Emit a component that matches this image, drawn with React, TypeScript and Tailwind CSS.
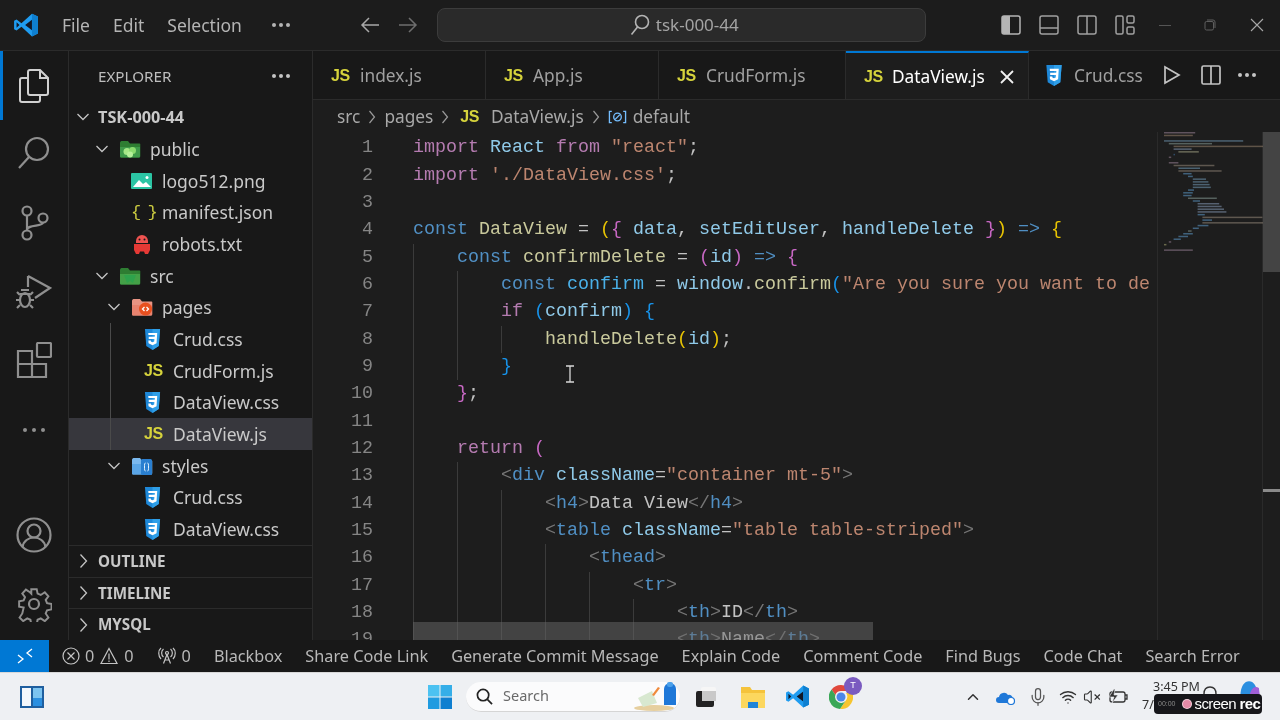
import React from 'react';
import { Mic, Wifi, VolumeX, ChevronUp } from 'lucide-react';

type Token = [string, string];

const KW = 'text-[#c586c0]';
const BL = 'text-[#569cd6]';
const VAR = 'text-[#9cdcfe]';
const CON = 'text-[#4fc1ff]';
const FN = 'text-[#dcdcaa]';
const STR = 'text-[#ce9178]';
const TXT = 'text-[#d4d4d4]';
const YEL = 'text-[#ffd700]';
const PNK = 'text-[#da70d6]';
const BRK = 'text-[#179fff]';
const GR = 'text-[#808080]';

const codeLines: { indent: number; tokens: Token[] }[] = [
  { indent: 0, tokens: [[KW, 'import'], [TXT, ' '], [VAR, 'React'], [TXT, ' '], [KW, 'from'], [TXT, ' '], [STR, '"react"'], [TXT, ';']] },
  { indent: 0, tokens: [[KW, 'import'], [TXT, ' '], [STR, "'./DataView.css'"], [TXT, ';']] },
  { indent: 0, tokens: [] },
  { indent: 0, tokens: [[BL, 'const'], [TXT, ' '], [FN, 'DataView'], [TXT, ' = '], [YEL, '('], [PNK, '{'], [TXT, ' '], [VAR, 'data'], [TXT, ', '], [VAR, 'setEditUser'], [TXT, ', '], [VAR, 'handleDelete'], [TXT, ' '], [PNK, '}'], [YEL, ')'], [TXT, ' '], [BL, '=>'], [TXT, ' '], [YEL, '{']] },
  { indent: 1, tokens: [[BL, 'const'], [TXT, ' '], [FN, 'confirmDelete'], [TXT, ' = '], [PNK, '('], [VAR, 'id'], [PNK, ')'], [TXT, ' '], [BL, '=>'], [TXT, ' '], [PNK, '{']] },
  { indent: 2, tokens: [[BL, 'const'], [TXT, ' '], [CON, 'confirm'], [TXT, ' = '], [VAR, 'window'], [TXT, '.'], [FN, 'confirm'], [BRK, '('], [STR, '"Are you sure you want to de']] },
  { indent: 2, tokens: [[KW, 'if'], [TXT, ' '], [BRK, '('], [VAR, 'confirm'], [BRK, ')'], [TXT, ' '], [BRK, '{']] },
  { indent: 3, tokens: [[FN, 'handleDelete'], [YEL, '('], [VAR, 'id'], [YEL, ')'], [TXT, ';']] },
  { indent: 2, tokens: [[BRK, '}']] },
  { indent: 1, tokens: [[PNK, '}'], [TXT, ';']] },
  { indent: 1, tokens: [] },
  { indent: 1, tokens: [[KW, 'return'], [TXT, ' '], [PNK, '(']] },
  { indent: 2, tokens: [[GR, '<'], [BL, 'div'], [TXT, ' '], [VAR, 'className'], [TXT, '='], [STR, '"container mt-5"'], [GR, '>']] },
  { indent: 3, tokens: [[GR, '<'], [BL, 'h4'], [GR, '>'], [TXT, 'Data View'], [GR, '</'], [BL, 'h4'], [GR, '>']] },
  { indent: 3, tokens: [[GR, '<'], [BL, 'table'], [TXT, ' '], [VAR, 'className'], [TXT, '='], [STR, '"table table-striped"'], [GR, '>']] },
  { indent: 4, tokens: [[GR, '<'], [BL, 'thead'], [GR, '>']] },
  { indent: 5, tokens: [[GR, '<'], [BL, 'tr'], [GR, '>']] },
  { indent: 6, tokens: [[GR, '<'], [BL, 'th'], [GR, '>'], [TXT, 'ID'], [GR, '</'], [BL, 'th'], [GR, '>']] },
  { indent: 6, tokens: [[GR, '<'], [BL, 'th'], [GR, '>'], [TXT, 'Name'], [GR, '</'], [BL, 'th'], [GR, '>']] },
];

// [indent chars, length, colour] for the minimap rows
const minimapRows: [number, number, string][] = [
  [0, 26, '#7d6a7a'], [0, 24, '#7d6a5a'], [0, 0, ''], [0, 66, '#5f7f95'], [4, 36, '#6f7f7a'], [8, 100, '#7a6a5a'],
  [8, 15, '#6f7f95'], [12, 17, '#8a8a70'], [8, 1, '#3f6f9f'], [4, 2, '#7d6a7a'], [0, 0, ''], [4, 8, '#7d6a7a'],
  [8, 34, '#7a7065'], [12, 18, '#5f7f95'], [12, 36, '#7a7065'], [16, 7, '#4f7fa5'], [20, 4, '#4f7fa5'], [24, 11, '#5f7f95'],
  [24, 13, '#5f7f95'], [24, 14, '#5f7f95'], [24, 15, '#5f7f95'], [20, 5, '#4f7fa5'], [16, 8, '#4f7fa5'], [16, 7, '#4f7fa5'],
  [20, 24, '#6f7f7a'], [24, 6, '#4f7fa5'], [28, 18, '#6f7f95'], [28, 20, '#6f7f95'], [28, 22, '#6f7f95'], [28, 24, '#6f7f95'],
  [28, 6, '#4f7fa5'], [32, 50, '#7a7065'], [32, 8, '#4f7fa5'], [32, 68, '#7a7065'], [28, 9, '#4f7fa5'], [24, 5, '#4f7fa5'],
  [20, 3, '#6f7f7a'], [16, 8, '#4f7fa5'], [12, 8, '#4f7fa5'], [8, 6, '#4f7fa5'], [4, 2, '#7d6a7a'], [0, 2, '#8a8a60'],
  [0, 0, ''], [0, 24, '#7d6a7a'],
];

const VSCodeLogo = ({ className }: { className: string }) => (
  <svg viewBox="0 0 24 24" className={className}>
    <path d="M17.5 1.5 23 4.2v15.6l-5.5 2.7L7.8 13.6l-4.5 3.5L1 15.9V8.1l2.3-1.2 4.5 3.5L17.5 1.5Z" fill="#1f9cf0" />
    <path d="M17.5 7.2 11.2 12l6.3 4.8V7.2ZM3.3 9.4v5.2L6 12 3.3 9.4Z" fill="#111827" />
    <path d="M17.5 1.5 23 4.2v15.6l-5.5 2.7V1.5Z" fill="#0e7fd0" />
  </svg>
);

const JsIcon = ({ className = '' }: { className?: string }) => (
  <span className={`font-['Liberation_Sans'] font-bold text-[16px] tracking-[-0.5px] text-[#d6d33c] ${className}`}>JS</span>
);

const CssIcon = ({ className }: { className: string }) => (
  <svg viewBox="0 0 18 22" className={className}>
    <path d="M1 0h16l-1.4 18L9 22l-6.600-4L1 0Z" fill="#1e88d8" />
    <path d="M9 0h8l-1.400 18L9 22V0Z" fill="#2f9fe8" />
    <path d="M4.500 4h9.500l-.7 11L9 17l-4.200-2-.2-3h2.600l.1 1.200 1.700.7 1.800-.7.200-2.700H5v-2.300h6.300l.2-1.900H4.700L4.500 4Z" fill="#fff" />
  </svg>
);

const FolderIcon = ({ color, dark, accent }: { color: string; dark: string; accent: React.ReactNode }) => (
  <svg viewBox="0 0 22 20" className="w-[22px] h-[20px] shrink-0">
    <path d="M1 4c0-1 .7-2 1.500-2H9l2 2.500h9.500c.5 0 .8.400.8.800V17c0 1-.7 1.500-1.500 1.500H2.500C1.700 18.500 1 18 1 17V4Z" fill={dark} />
    <path d="M1 8h20v9c0 1-.7 1.500-1.500 1.500h-17C1.700 18.500 1 18 1 17V8Z" fill={color} />
    {accent}
  </svg>
);

const Chevron = ({ open = true }: { open?: boolean }) => (
  <svg viewBox="0 0 18 18" className="w-[18px] h-[18px] shrink-0" fill="none" stroke="#c4c4c4" strokeWidth="1.300">
    {open ? <path d="M3.500 6 9 11.500 14.500 6" /> : <path d="M6.500 2.500 12.500 9l-6 6.500" />}
  </svg>
);

const IndentGuide = () => <span className="self-stretch w-[34px] shrink-0 border-l border-[#4a4a4a]" />;

const CssRow = ({ name, guide = false }: { name: string; guide?: boolean }) => (
  <div className={`h-[31.7px] flex items-center ${guide ? 'pl-[41px]' : 'pl-[75px]'}`}>
    {guide && <IndentGuide />}
    <CssIcon className="w-[17px] h-[21px] shrink-0 mr-[12px]" />
    <span>{name}</span>
  </div>
);

const SectionRow = ({ name }: { name: string }) => (
  <div className="h-[31.7px] flex items-center pl-[5px] border-t border-[#2b2b2b] font-bold text-[15.200px] text-[#c8c8c8]">
    <Chevron open={false} />
    <span className="ml-[6px]">{name}</span>
  </div>
);

const FolderRow = ({ name, deep, icon }: { name: string; deep?: boolean; icon: React.ReactNode }) => (
  <div className={`h-[31.7px] flex items-center ${deep ? 'pl-[36px]' : 'pl-[24px]'}`}>
    <Chevron />
    <span className="w-[8px]" />
    {icon}
    <span className="ml-[9px]">{name}</span>
  </div>
);

const Sidebar = () => (
  <aside className="w-[243px] shrink-0 bg-[#181818] flex flex-col text-[#c9c9c9] text-[17.5px]">
    <div className="h-[50.500px] shrink-0 flex items-center justify-between pl-[29px] pr-[22px] text-[15.200px] text-[#bdbdbd]">
      <span>EXPLORER</span>
      <span className="flex gap-[3px]">
        <i className="w-[4px] h-[4px] rounded-full bg-[#c4c4c4]" />
        <i className="w-[4px] h-[4px] rounded-full bg-[#c4c4c4]" />
        <i className="w-[4px] h-[4px] rounded-full bg-[#c4c4c4]" />
      </span>
    </div>
    <div className="h-[31.7px] flex items-center pl-[5px] font-bold text-[16.300px]">
      <Chevron />
      <span className="ml-[6px]">TSK-000-44</span>
    </div>
    <FolderRow
      name="public"
      icon={<FolderIcon color="#3f9a4a" dark="#2e7d32" accent={<><circle cx="8" cy="12.500" r="3.500" fill="#a5e887" /><circle cx="13.500" cy="11.500" r="3.500" fill="#8bdc6f" /><circle cx="11" cy="15.500" r="3" fill="#b6f09a" /></>} />}
    />
    <div className="h-[31.7px] flex items-center pl-[62px]">
      <svg viewBox="0 0 22 18" className="w-[22px] h-[18px] shrink-0 mr-[9px]">
        <rect width="21" height="16" y="1" rx="1" fill="#2bc5a4" />
        <path d="m2 15 6-7 4 4 3-2 5 5H2Z" fill="#fff" />
        <circle cx="16" cy="5.500" r="1.500" fill="#fff" />
      </svg>
      <span>logo512.png</span>
    </div>
    <div className="h-[31.7px] flex items-center pl-[62px]">
      <span className="w-[22px] mr-[9px] text-center text-[#cbcb41] text-[17px] font-['Liberation_Mono'] tracking-[-2px] whitespace-pre">{'{ }'}</span>
      <span>manifest.json</span>
    </div>
    <div className="h-[31.7px] flex items-center pl-[62px]">
      <svg viewBox="0 0 22 22" className="w-[22px] h-[22px] shrink-0 mr-[9px]">
        <path d="M5 8a6 6 0 0 1 12 0v2H5V8Z" fill="#ef5350" />
        <path d="M3 11h16v6l-2 4h-3l-1-2.500H9L8 21H5l-2-4v-6Z" fill="#e53935" />
        <circle cx="8.500" cy="6.500" r="1" fill="#181818" />
        <circle cx="13.500" cy="6.500" r="1" fill="#181818" />
      </svg>
      <span>robots.txt</span>
    </div>
    <FolderRow name="src" icon={<FolderIcon color="#43a047" dark="#2e7d32" accent={<path d="M5 9h12l-3 8-3-2-3 2-3-8Z" fill="#2ea24c" />} />} />
    <FolderRow
      name="pages"
      deep
      icon={<FolderIcon color="#e8836f" dark="#e99483" accent={<><circle cx="14.500" cy="12" r="6.500" fill="#e8501f" /><path d="m13.500 10-2 2 2 2m2-4 2 2-2 2" stroke="#fff" strokeWidth="1.300" fill="none" /></>} />}
    />
    <CssRow name="Crud.css" guide />
    <div className="h-[31.7px] flex items-center pl-[41px]">
      <IndentGuide />
      <JsIcon className="w-[29px] shrink-0" />
      <span>CrudForm.js</span>
    </div>
    <CssRow name="DataView.css" guide />
    <div className="h-[31.7px] flex items-center pl-[41px] bg-[#37373d]">
      <IndentGuide />
      <JsIcon className="w-[29px] shrink-0" />
      <span>DataView.js</span>
    </div>
    <FolderRow
      name="styles"
      deep
      icon={<FolderIcon color="#5aa5e6" dark="#7ab8ee" accent={<><rect x="10" y="3" width="11" height="16" rx="1.500" fill="#2a7fd0" /><path d="M14.500 7c-1 0-1 1.500-1 4s0 4 1 4m2-8c1 0 1 1.500 1 4s0 4-1 4" stroke="#e3f2fd" fill="none" /></>} />}
    />
    <CssRow name="Crud.css" />
    <CssRow name="DataView.css" />
    <SectionRow name="OUTLINE" />
    <SectionRow name="TIMELINE" />
    <SectionRow name="MYSQL" />
  </aside>
);

const ActivityBar = () => (
  <nav className="w-[69px] shrink-0 bg-[#181818] border-r border-[#2b2b2b] flex flex-col justify-between">
    <div className="flex flex-col">
      <div className="h-[69px] flex items-center justify-center border-l-[3px] border-[#0078d4] pr-[4px]">
        <svg viewBox="0 0 32 36" className="w-[32px] h-[36px]" fill="none" stroke="#d0d0d0" strokeWidth="2">
          <path d="M10 4a2 2 0 0 1 2-2h10l8 8v15a2 2 0 0 1-2 2H12a2 2 0 0 1-2-2V4Z" />
          <path d="M22 2v8h8M10 10H4a2 2 0 0 0-2 2v20a2 2 0 0 0 2 2h16a2 2 0 0 0 2-2v-5" />
        </svg>
      </div>
      <div className="h-[65px] flex items-center justify-center">
        <svg viewBox="0 0 34 36" className="w-[34px] h-[36px]" fill="none" stroke="#8f8f8f" strokeWidth="2.200">
          <circle cx="20" cy="14" r="11" />
          <path d="M12 22 2 33" />
        </svg>
      </div>
      <div className="h-[74px] flex items-center justify-center pr-[1px]">
        <svg viewBox="0 0 30 38" className="w-[30px] h-[38px]" fill="none" stroke="#8f8f8f" strokeWidth="2.200">
          <circle cx="8" cy="8" r="4.500" />
          <circle cx="24" cy="15" r="4.500" />
          <circle cx="8" cy="32" r="4.500" />
          <path d="M8 12.500v15M8 27c0-6 16-3 16-7.500" />
        </svg>
      </div>
      <div className="h-[66px] flex items-center justify-center pr-[1px]">
        <svg viewBox="0 0 36 36" className="w-[36px] h-[36px]" fill="none" stroke="#8f8f8f" strokeWidth="2.200">
          <path d="M12 2v11M12 2l22 12-15 10" />
          <ellipse cx="9" cy="26" rx="5" ry="7" />
          <path d="M4 20h10M1 18l3 3M17 18l-3 3M0 26h4M14 26h4M1 34l3-3M17 34l-3-3M5 16h8" />
        </svg>
      </div>
      <div className="h-[70px] flex items-center justify-center pr-[1px]">
        <svg viewBox="0 0 36 36" className="w-[36px] h-[36px]" fill="none" stroke="#8f8f8f" strokeWidth="2.200">
          <rect x="21" y="1" width="14" height="14" rx="1" />
          <path d="M2 9h14v26H2zM2 22h28v13H16" />
        </svg>
      </div>
      <div className="h-[70px] flex items-center justify-center gap-[5px] pr-[1px]">
        <i className="w-[4px] h-[4px] rounded-full bg-[#8f8f8f]" />
        <i className="w-[4px] h-[4px] rounded-full bg-[#8f8f8f]" />
        <i className="w-[4px] h-[4px] rounded-full bg-[#8f8f8f]" />
      </div>
    </div>
    <div className="flex flex-col pb-[2px]">
      <div className="h-[69px] flex items-center justify-center pr-[1px]">
        <svg viewBox="0 0 36 36" className="w-[36px] h-[36px]" fill="none" stroke="#8f8f8f" strokeWidth="2.200">
          <circle cx="18" cy="18" r="16.500" />
          <circle cx="18" cy="14" r="6.500" />
          <path d="M6.500 30c1-6 6-9.500 11.500-9.500S28.500 24 29.500 30" />
        </svg>
      </div>
      <div className="h-[69px] flex items-center justify-center pr-[1px]">
        <svg viewBox="0 0 36 36" className="w-[36px] h-[36px]" fill="none" stroke="#8f8f8f" strokeWidth="2.200">
          <circle cx="18" cy="18" r="5" />
          <path d="M15 1.500h6l1 5 3.500 1.500 4.500-3 4 4.500-3 4 1.500 3.500 5 1v6l-5 1-1.500 3.500 3 4.500-4 4-4.500-3-3.500 1.500-1 5h-6l-1-5-3.500-1.500-4.500 3-4-4 3-4.500L6.500 22l-5-1v-6l5-1L8 10.500l-3-4 4-4.500 4.500 3L15 6.500z" transform="translate(1.800 1.800) scale(.9)" />
        </svg>
      </div>
    </div>
  </nav>
);

const Tab = ({ name, width }: { name: string; width: string }) => (
  <div className={`${width} shrink-0 h-full flex items-center pl-[18px] pt-[1px] border-r border-[#2b2b2b] bg-[#181818] text-[#a0a0a0]`}>
    <JsIcon className="w-[29px] shrink-0" />
    <span>{name}</span>
  </div>
);

const TabBar = () => (
  <div className="h-[49px] flex items-stretch bg-[#181818] border-b border-[#2b2b2b] text-[17.300px] overflow-hidden shrink-0">
    <Tab name="index.js" width="w-[173px]" />
    <Tab name="App.js" width="w-[173px]" />
    <Tab name="CrudForm.js" width="w-[187px]" />
    <div className="w-[183px] shrink-0 flex items-center pl-[18px] pr-[13px] pt-[1px] bg-[#1d1d1d] border-t-2 border-[#0078d4] -mb-[1px] border-r border-r-[#2b2b2b] text-white">
      <JsIcon className="w-[28px] shrink-0" />
      <span className="flex-1">DataView.js</span>
      <svg viewBox="0 0 16 16" className="w-[16px] h-[16px]" fill="none" stroke="#f0f0f0" strokeWidth="1.800">
        <path d="m2 2 12 12M14 2 2 14" />
      </svg>
    </div>
    <div className="flex-1 flex items-center pl-[16px] pt-[1px] text-[#a0a0a0] min-w-0">
      <CssIcon className="w-[18px] h-[21px] shrink-0 mr-[11px]" />
      <span>Crud.css</span>
    </div>
    <div className="flex items-center pr-[24px] shrink-0">
      <svg viewBox="0 0 18 20" className="w-[18px] h-[20px] mr-[20px]" fill="none" stroke="#c4c4c4" strokeWidth="1.700">
        <path d="M2 2v16l14-8L2 2Z" />
      </svg>
      <svg viewBox="0 0 20 20" className="w-[20px] h-[20px] mr-[17px]" fill="none" stroke="#c4c4c4" strokeWidth="1.700">
        <rect x="1" y="1" width="18" height="18" rx="1.500" />
        <path d="M10 1v18" />
      </svg>
      <span className="flex gap-[3px]">
        <i className="w-[4px] h-[4px] rounded-full bg-[#c4c4c4]" />
        <i className="w-[4px] h-[4px] rounded-full bg-[#c4c4c4]" />
        <i className="w-[4px] h-[4px] rounded-full bg-[#c4c4c4]" />
      </span>
    </div>
  </div>
);

const Sep = () => (
  <svg viewBox="0 0 8 14" className="w-[8px] h-[14px] mx-[8px] shrink-0" fill="none" stroke="#9a9a9a" strokeWidth="1.200">
    <path d="m1.500 1 5 6-5 6" />
  </svg>
);

const Breadcrumb = () => (
  <div className="h-[32.300px] shrink-0 flex items-center pl-[24px] pt-[2px] text-[17.300px] text-[#a8a8a8] bg-[#1d1d1d]">
    <span>src</span>
    <Sep />
    <span>pages</span>
    <Sep />
    <JsIcon className="ml-[3px] mr-[12px]" />
    <span>DataView.js</span>
    <Sep />
    <svg viewBox="0 0 20 16" className="w-[19px] h-[16px] mr-[6px]" fill="none" stroke="#75beff" strokeWidth="1.400">
      <path d="M4 2H1.500v12H4M16 2h2.500v12H16" />
      <circle cx="10" cy="8" r="4" />
      <path d="m7.500 10.500 5-5" />
    </svg>
    <span>default</span>
  </div>
);

const Editor = () => (
  <div className="flex-1 min-h-0 flex relative overflow-hidden bg-[#1d1d1d]">
    <div className="w-[60px] shrink-0 pt-[2px] text-right text-[#858585] font-['Liberation_Mono'] text-[18.330px] leading-[27.350px]">
      {codeLines.map((_, i) => (
        <div key={i} className="h-[27.350px]">{i + 1}</div>
      ))}
    </div>
    <div className="w-[744px] ml-[40px] pt-[2px] shrink-0 overflow-hidden opacity-90 font-['Liberation_Mono'] text-[18.330px] leading-[27.350px] whitespace-pre">
      {codeLines.map((line, i) => (
        <div key={i} className="h-[27.350px] flex">
          {Array.from({ length: line.indent }).map((_, g) => (
            <span key={g} className="w-[44px] h-full shrink-0 border-l border-[#3f3f3f]" />
          ))}
          <span>
            {line.tokens.map((t, j) => (
              <span key={j} className={t[0]}>{t[1]}</span>
            ))}
          </span>
        </div>
      ))}
    </div>
    <div className="w-[105px] shrink-0 border-l border-[#2a2a2a]">
      <svg viewBox="0 0 105 130" className="w-[105px] h-[130px] opacity-70">
        {minimapRows.map((r, i) =>
          r[1] > 0 ? <rect key={i} x={6 + r[0] * 1.2} y={i * 2.73} width={Math.min(r[1] * 1.2, 97)} height="1.500" fill={r[2]} /> : null
        )}
      </svg>
    </div>
    <div className="flex-1 flex flex-col border-l border-[#2a2a2a]">
      <div className="h-[140px] bg-[#444444]" />
      <div className="h-[217px]" />
      <div className="h-[3px] bg-[#8a8a8a]" />
    </div>
    {/* horizontal scrollbar slider */}
    <div className="absolute left-[100px] bottom-0 w-[460px] h-[18px] bg-[#6a6a6a]/50" />
    {/* mouse I-beam */}
    <svg viewBox="0 0 10 18" className="absolute left-[252px] top-[233px] w-[10px] h-[18px]" fill="none" stroke="#d8d8d8" strokeWidth="1.300">
      <path d="M1 1h8M5 1v16M1 17h8" />
    </svg>
  </div>
);

const TitleBar = () => (
  <header className="h-[51px] shrink-0 flex items-center bg-[#1c1c1c] border-b border-[#2b2b2b] text-[#b4b4b4] text-[17.500px] relative">
    <VSCodeLogo className="w-[26px] h-[26px] ml-[13px] mr-[23px] shrink-0" />
    <span>File</span>
    <span className="ml-[23px]">Edit</span>
    <span className="ml-[23px]">Selection</span>
    <span className="ml-[30px] flex gap-[3px]">
      <i className="w-[4px] h-[4px] rounded-full bg-[#b4b4b4]" />
      <i className="w-[4px] h-[4px] rounded-full bg-[#b4b4b4]" />
      <i className="w-[4px] h-[4px] rounded-full bg-[#b4b4b4]" />
    </span>
    <svg viewBox="0 0 20 18" className="w-[20px] h-[18px] ml-[70px]" fill="none" stroke="#a8a8a8" strokeWidth="1.500">
      <path d="M19 9H2M9 2 2 9l7 7" />
    </svg>
    <svg viewBox="0 0 20 18" className="w-[20px] h-[18px] ml-[18px]" fill="none" stroke="#6e6e6e" strokeWidth="1.500">
      <path d="M1 9h17M11 2l7 7-7 7" />
    </svg>
    <div className="w-[489px] h-[34px] ml-[19px] rounded-[8px] bg-[#2a2a2a] border border-[#3c3c3c] flex items-center justify-center gap-[6px] text-[17px] text-[#a4a4a4] pl-[6px]">
      <svg viewBox="0 0 20 22" className="w-[20px] h-[22px]" fill="none" stroke="#b4b4b4" strokeWidth="1.600">
        <circle cx="12" cy="8" r="6.500" />
        <path d="M7.500 13 1.500 20.500" />
      </svg>
      <span>tsk-000-44</span>
    </div>
    <div className="ml-auto flex items-center gap-[18px] mr-[145px]">
      <svg viewBox="0 0 20 20" className="w-[20px] h-[20px]">
        <rect x="1" y="1" width="18" height="18" rx="2" fill="none" stroke="#b4b4b4" strokeWidth="1.500" />
        <path d="M1 3a2 2 0 0 1 2-2h6v18H3a2 2 0 0 1-2-2V3Z" fill="#b4b4b4" />
      </svg>
      <svg viewBox="0 0 20 20" className="w-[20px] h-[20px]" fill="none" stroke="#a0a0a0" strokeWidth="1.500">
        <rect x="1" y="1" width="18" height="18" rx="2" />
        <path d="M1 13h18" />
      </svg>
      <svg viewBox="0 0 20 20" className="w-[20px] h-[20px]" fill="none" stroke="#a0a0a0" strokeWidth="1.500">
        <rect x="1" y="1" width="18" height="18" rx="2" />
        <path d="M10 1v18" />
      </svg>
      <svg viewBox="0 0 20 20" className="w-[20px] h-[20px]" fill="none" stroke="#a0a0a0" strokeWidth="1.500">
        <rect x="1" y="1" width="7" height="18" rx="1.500" />
        <rect x="12" y="1" width="7" height="7" rx="1.500" />
        <rect x="12" y="12" width="7" height="7" rx="1.500" />
      </svg>
    </div>
    {/* window controls */}
    <div className="absolute right-0 top-0 h-full flex items-center">
      <i className="block w-[12px] h-[1px] bg-[#555555] mr-[33px]" />
      <svg viewBox="0 0 12 12" className="w-[12px] h-[12px] mr-[34px]" fill="none" stroke="#5e5e5e" strokeWidth="1">
        <rect x="1" y="2.500" width="8.500" height="8.500" rx="1.500" />
        <path d="M3 1h6a2 2 0 0 1 2 2v6" />
      </svg>
      <svg viewBox="0 0 14 14" className="w-[14px] h-[14px] mr-[16px]" fill="none" stroke="#a8a8a8" strokeWidth="1.100">
        <path d="m1 1 12 12M13 1 1 13" />
      </svg>
    </div>
  </header>
);

const StatusBar = () => (
  <footer className="h-[32px] shrink-0 bg-[#181818] flex items-center text-[16.250px] text-[#b8b8b8]">
    <div className="w-[49px] h-full bg-[#0078d4] flex items-center justify-center">
      <svg viewBox="0 0 16 16" className="w-[16px] h-[16px]" fill="none" stroke="#ffffff" strokeWidth="1.300">
        <path d="m1 7 5 4-5 4M15 1l-5 4 5 4" />
      </svg>
    </div>
    <svg viewBox="0 0 18 18" className="w-[18px] h-[18px] ml-[13px]" fill="none" stroke="#c4c4c4" strokeWidth="1.200">
      <circle cx="9" cy="9" r="8" />
      <path d="m5.500 5.500 7 7m0-7-7 7" />
    </svg>
    <span className="ml-[5px]">0</span>
    <svg viewBox="0 0 18 18" className="w-[18px] h-[18px] ml-[6px]" fill="none" stroke="#c4c4c4" strokeWidth="1.200">
      <path d="M9 1.500 1 16.500h16L9 1.500ZM9 6.500v6M9 13.500v1.500" />
    </svg>
    <span className="ml-[6px]">0</span>
    <svg viewBox="0 0 18 18" className="w-[18px] h-[18px] ml-[24px]" fill="none" stroke="#c4c4c4" strokeWidth="1.200">
      <circle cx="9" cy="6" r="1.500" />
      <path d="M5.500 16.500 9 7.500l3.500 9M6.500 13h5M5.500 10C3 8 3 4 5.500 2M12.500 10c2.500-2 2.500-6 0-8M3 12C0 8.500 0 3.500 3 1M15 12c3-3.500 3-8.500 0-11" />
    </svg>
    <span className="ml-[6px]">0</span>
    <div className="ml-[23px] flex items-center gap-[23px] whitespace-nowrap">
      <span>Blackbox</span>
      <span>Share Code Link</span>
      <span>Generate Commit Message</span>
      <span>Explain Code</span>
      <span>Comment Code</span>
      <span>Find Bugs</span>
      <span>Code Chat</span>
      <span>Search Error</span>
    </div>
  </footer>
);

const Taskbar = () => (
  <div className="h-[48px] shrink-0 bg-[#eef0f3] flex items-center relative border-t border-[#d8d8d8]">
    <svg viewBox="0 0 24 22" className="w-[24px] h-[22px] ml-[20px]">
      <rect width="24" height="22" fill="#1f5f9f" />
      <rect x="2" y="2" width="9" height="18" fill="#f4f8fc" />
      <rect x="13" y="2" width="9" height="10" fill="#7cc4f0" />
      <rect x="13" y="12" width="9" height="8" fill="#2a8fe0" />
    </svg>
    <svg viewBox="0 0 24 24" className="w-[24px] h-[24px] ml-[384px]">
      <rect x="0" y="0" width="11.500" height="11.500" fill="#4cc2f1" />
      <rect x="12.500" y="0" width="11.500" height="11.500" fill="#35aee8" />
      <rect x="0" y="12.500" width="11.500" height="11.500" fill="#1e9be0" />
      <rect x="12.500" y="12.500" width="11.500" height="11.500" fill="#0f7fd0" />
    </svg>
    <div className="w-[214px] h-[30px] ml-[14px] rounded-full bg-[#fbfbfc] border-b border-[#d5d5d5] flex items-center pl-[10px] text-[14.500px] text-[#6a6a6a]">
      <svg viewBox="0 0 18 18" className="w-[17px] h-[17px] mr-[10px]" fill="none" stroke="#222222" strokeWidth="1.800">
        <circle cx="7.500" cy="7.500" r="6" />
        <path d="m12 12 5 5" />
      </svg>
      <span>Search</span>
      <svg viewBox="0 0 44 30" className="w-[44px] h-[30px] ml-auto mr-[2px]">
        <ellipse cx="20" cy="27" rx="20" ry="3" fill="#e6cf9f" />
        <path d="m4 17 14-7 5 12-14 4z" fill="#d8e8d0" />
        <path d="m18 14 6-8 2 1-6 8z" fill="#f08a3c" />
        <path d="M30 8a6 6 0 0 1 12 0v16H30z" fill="#1f78d8" />
        <rect x="33" y="1" width="6" height="5" rx="2" fill="#4aa0ea" />
      </svg>
    </div>
    <svg viewBox="0 0 20 20" className="w-[20px] h-[20px] ml-[16px]">
      <rect x="5" y="0" width="15" height="14" rx="2" fill="#f6f6f6" />
      <path d="M0 6a2 2 0 0 1 2-2h4v10h12v4a2 2 0 0 1-2 2H2a2 2 0 0 1-2-2V6Z" fill="#222222" />
      <rect x="6" y="4" width="14" height="10" fill="#c9c9c9" />
    </svg>
    <svg viewBox="0 0 26 24" className="w-[26px] h-[24px] ml-[24px]">
      <path d="M1 2h9l2 3h13v18H1V2Z" fill="#f5c33b" />
      <path d="M1 8h24v15H1V8Z" fill="#fcd75e" />
      <rect x="8" y="17" width="10" height="6" fill="#1f84d8" />
    </svg>
    <VSCodeLogo className="w-[25px] h-[25px] ml-[19px]" />
    <div className="ml-[19px] relative w-[24px] h-[24px]">
      <svg viewBox="0 0 24 24" className="w-[24px] h-[24px]">
        <path d="M12 0a12 12 0 0 1 10.400 6H12a6 6 0 0 0-5.700 4L2.600 4.400A12 12 0 0 1 12 0Z" fill="#e0483c" />
        <path d="M22.400 6A12 12 0 0 1 11 24l5.500-8a6 6 0 0 0 .6-8l5.300-2Z" fill="#f6c52f" />
        <path d="M2.600 4.400 6.400 10a6 6 0 0 0 10 6L11 24A12 12 0 0 1 2.600 4.400Z" fill="#3aa757" />
        <circle cx="12" cy="12" r="4.500" fill="#4a86e8" />
      </svg>
      <span className="absolute -top-[8px] -right-[9px] w-[18px] h-[18px] rounded-full bg-[#7a5bc0] text-white text-[9px] flex items-center justify-center font-['Liberation_Sans']">T</span>
    </div>
    {/* tray */}
    <ChevronUp className="w-[18px] h-[18px] text-[#333333] ml-[111px]" />
    <svg viewBox="0 0 20 16" className="w-[20px] h-[16px] ml-[14px]">
      <path d="M3 14a3 3 0 0 1 0-6 5 5 0 0 1 9-2 4 4 0 0 1 5 4 2 2 0 0 1 0 4H3Z" fill="#1f78d8" />
      <circle cx="15" cy="12" r="3.500" fill="#fff" stroke="#1f78d8" strokeWidth="1.200" />
    </svg>
    <Mic className="w-[20px] h-[20px] ml-[12px] text-[#555555]" strokeWidth={1.500} />
    <Wifi className="w-[18px] h-[18px] ml-[11px] text-[#333333]" strokeWidth={1.800} />
    <VolumeX className="w-[18px] h-[18px] ml-[6px] text-[#333333]" strokeWidth={1.500} />
    <svg viewBox="0 0 22 16" className="w-[22px] h-[16px] ml-[5px]" fill="none" stroke="#333333" strokeWidth="1.300">
      <rect x="4" y="3" width="15" height="10" rx="2" />
      <path d="M19 6h2v4h-2" />
      <path d="M8 0 3 8h5l-2 6 6-8H8l1-6Z" fill="#333333" stroke="#eef0f3" strokeWidth=".6" />
    </svg>
    <span className="absolute left-[1153px] top-[5px] text-[12.500px] text-[#333333]">3:45 PM</span>
    <span className="absolute left-[1142px] top-[23px] text-[12.500px] text-[#333333]">7/</span>
    {/* notification and copilot icons behind the recorder badge */}
    <svg viewBox="0 0 14 10" className="absolute left-[1203px] top-[12px] w-[14px] h-[10px]" fill="none" stroke="#333333" strokeWidth="1.400">
      <path d="M1 9c0-5 2-7 6-7s6 2 6 7" />
    </svg>
    <svg viewBox="0 0 22 14" className="absolute left-[1236px] top-[8px] w-[24px] h-[16px]">
      <path d="M4 14C4 4 8 0 12 0s7 4 9 14z" fill="#2b8fe0" />
      <path d="M12 14c2-8 5-10 9-8l1 8z" fill="#a05fd8" />
    </svg>
    {/* recorder badge */}
    <div className="absolute left-[1154px] top-[21px] w-[108px] h-[20px] rounded-[4px] bg-[#16161a] flex items-center pl-[4px] font-['Liberation_Sans'] text-white whitespace-pre">
      <span className="text-[7px] text-[#8a8a8a] shrink-0">00:00</span>
      <span className="w-[10px] h-[10px] shrink-0 rounded-full bg-[#e58aa8] border border-[#ffffff]/60 ml-[6px]" />
      <span className="ml-[3px] text-[15px] tracking-[-0.6px]">screen<b> rec</b></span>
    </div>
  </div>
);

export default function App() {
  return (
    <div className="w-[1280px] h-[720px] overflow-hidden flex flex-col bg-[#1d1d1d] font-['Noto_Sans',sans-serif] blur-[0.4px]">
      <TitleBar />
      <div className="flex-1 min-h-0 flex">
        <ActivityBar />
        <Sidebar />
        <main className="flex-1 min-w-0 flex flex-col border-l border-[#2b2b2b]">
          <TabBar />
          <Breadcrumb />
          <Editor />
        </main>
      </div>
      <StatusBar />
      <Taskbar />
    </div>
  );
}
